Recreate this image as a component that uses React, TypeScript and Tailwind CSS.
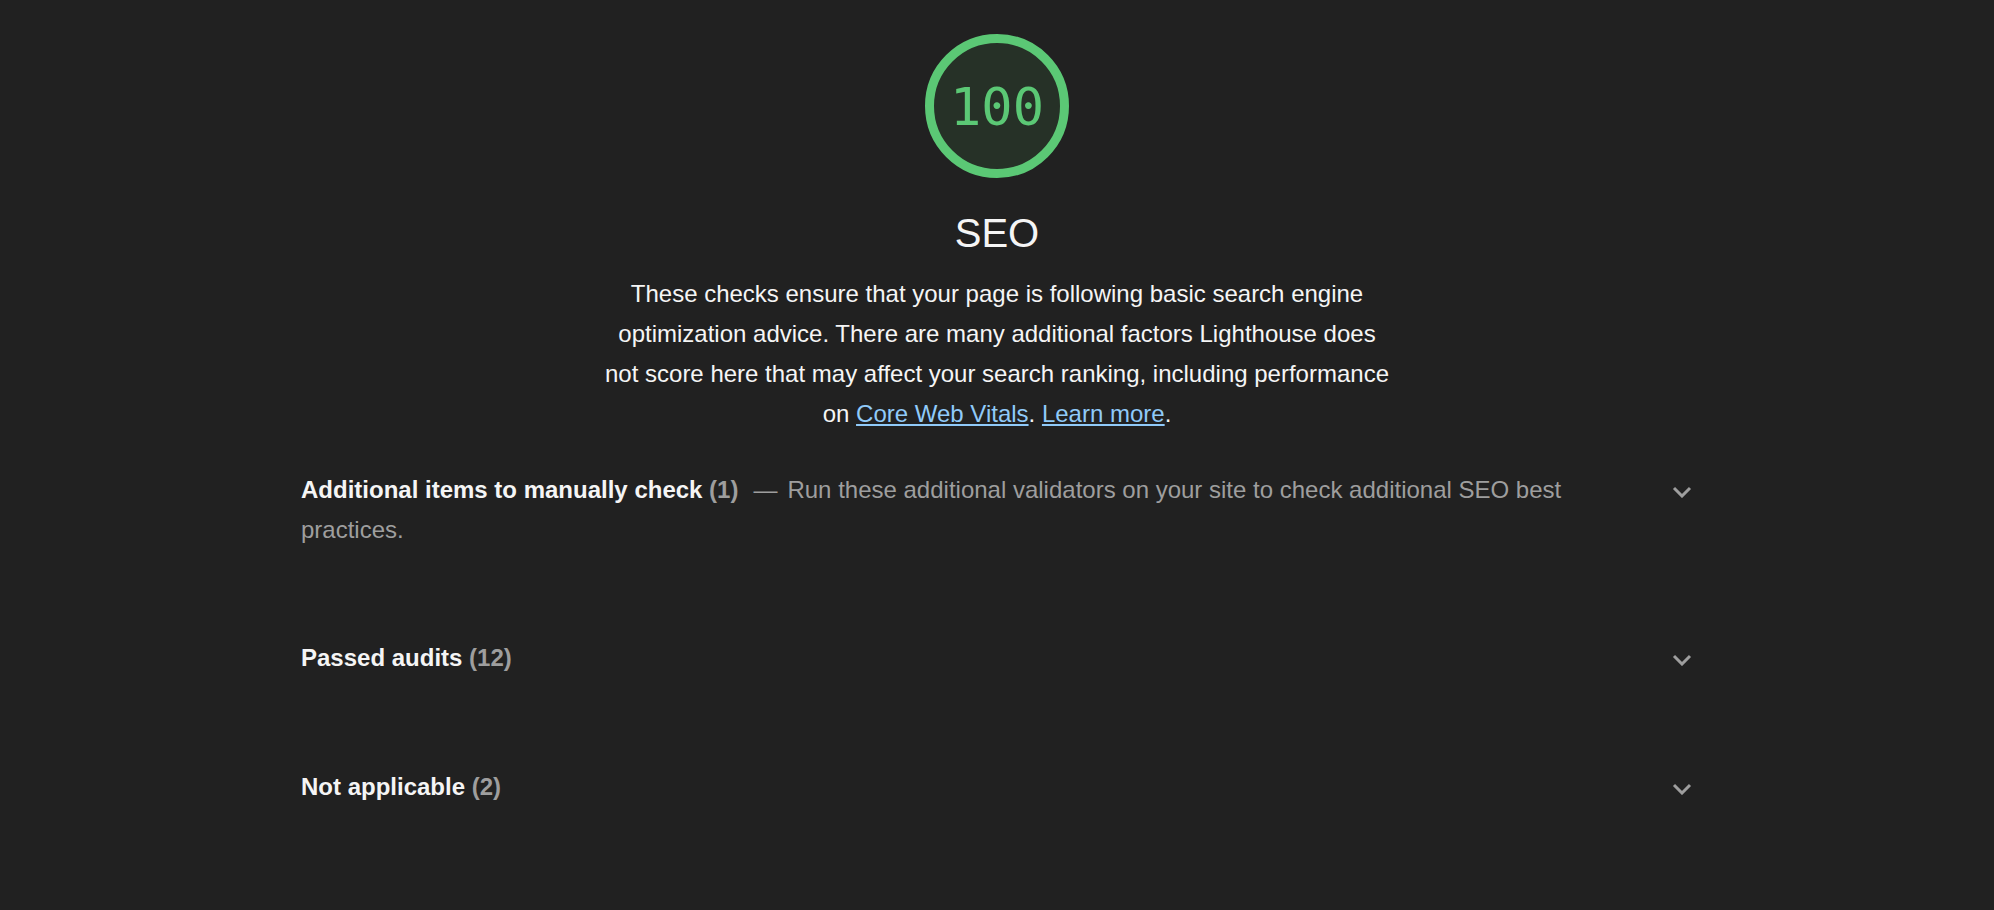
import React from "react";

function Chevron() {
  return (
    <svg width="20" height="12" viewBox="0 0 20 12" fill="none" className="block">
      <path d="M2 2 L10 10 L18 2" stroke="#9e9e9e" strokeWidth="3" strokeLinecap="butt" strokeLinejoin="miter" />
    </svg>
  );
}

function Row({ children, className }: { children: React.ReactNode; className?: string }) {
  return (
    <div className={"flex items-start " + (className ?? "")}>
      <div className="flex-1 mr-[40px] text-[24px] leading-[40px]">{children}</div>
      <div className="w-[20px] h-[40px] flex items-center pt-[3px] mr-[1px]">
        <Chevron />
      </div>
    </div>
  );
}

export default function App() {
  return (
    <div className="min-h-[910px] w-full bg-[#212121] font-['Liberation_Sans',Arial,sans-serif] text-[#f5f5f5]">
      <div className="flex flex-col items-center pt-[34px]">
        <svg width="144" height="144" viewBox="0 0 144 144" className="block">
          <circle cx="72" cy="72" r="67.5" fill="#263127" stroke="#5bc875" strokeWidth="9" />
          <text
            x="72"
            y="73"
            textAnchor="middle"
            dominantBaseline="central"
            fill="#5bc875"
            fontFamily="'DejaVu Sans Mono', monospace"
            fontSize="52"
          >
            100
          </text>
        </svg>
        <div className="mt-[31px] text-[40px] leading-[48px] text-[#f5f5f5]">SEO</div>
        <p className="mt-[17px] w-[880px] text-center text-[24px] leading-[40px] text-[#f5f5f5]">
          These checks ensure that your page is following basic search engine
          <br />
          optimization advice. There are many additional factors Lighthouse does
          <br />
          not score here that may affect your search ranking, including performance
          <br />
          on <a className="text-[#90caf9] underline">Core Web Vitals</a>.{" "}
          <a className="text-[#90caf9] underline">Learn more</a>.
        </p>
      </div>
      <div className="mx-auto w-[1392px] mt-[36px] flex flex-col">
        <Row>
          <span className="font-bold text-[#f5f5f5]">Additional items to manually check</span>
          <span className="font-bold text-[#9e9e9e]"> (1)</span>
          <span className="text-[#9e9e9e] ml-[15px] mr-[10px]">—</span>
          <span className="text-[#9e9e9e]">
            Run these additional validators on your site to check additional SEO best practices.
          </span>
        </Row>
        <Row className="mt-[88px]">
          <span className="font-bold text-[#f5f5f5]">Passed audits</span>
          <span className="font-bold text-[#9e9e9e]"> (12)</span>
        </Row>
        <Row className="mt-[89px]">
          <span className="font-bold text-[#f5f5f5]">Not applicable</span>
          <span className="font-bold text-[#9e9e9e]"> (2)</span>
        </Row>
      </div>
    </div>
  );
}
